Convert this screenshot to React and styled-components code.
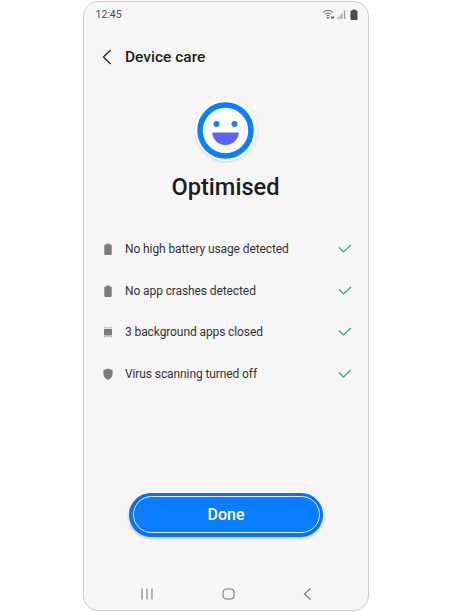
import React from "react";
import styled, { createGlobalStyle } from "styled-components";

const Global = createGlobalStyle`
  html, body { margin: 0; padding: 0; background: #fff; }
  body { font-family: Roboto, "Liberation Sans", sans-serif; }
`;

const Page = styled.div`
  width: 450px;
  height: 612px;
  padding: 1px 0 0 83px;
  box-sizing: border-box;
  overflow: hidden;
`;

const Phone = styled.div`
  width: 286px;
  height: 610px;
  box-sizing: border-box;
  background: #f6f6f6;
  border: 1.5px solid #cccccc;
  border-radius: 15px;
  display: flex;
  flex-direction: column;
`;

const StatusBar = styled.div`
  height: 24px;
  padding: 0 10px 0 11.5px;
  display: flex;
  align-items: center;
  justify-content: space-between;
`;

const Time = styled.span`
  font-size: 10.5px;
  color: #4a4a4a;
`;

const StatusIcons = styled.div`
  display: flex;
  align-items: center;
  gap: 2px;
`;

const Header = styled.div`
  height: 42px;
  margin-top: 10px;
  padding-left: 17.5px;
  display: flex;
  align-items: center;
  gap: 13.5px;
`;

const Title = styled.h1`
  margin: 0;
  font-size: 15.5px;
  font-weight: 500;
  color: #1c1c1c;
`;

const Hero = styled.div`
  margin-top: 21px;
  padding-right: 1px;
  display: flex;
  flex-direction: column;
  align-items: center;
`;

const Face = styled.div`
  width: 62px;
  height: 62px;
  border-radius: 50%;
  background: #fff;
  box-shadow: 0 1px 3px rgba(0, 0, 0, 0.14);
  display: flex;
  align-items: center;
  justify-content: center;
`;

const Heading = styled.h2`
  margin: 10px 0 0;
  font-size: 23.6px;
  line-height: 32px;
  font-weight: 500;
  color: #1d1d1d;
`;

const List = styled.ul`
  margin: 25.5px 0 0;
  padding: 0 0 0 19px;
  list-style: none;
`;

const Row = styled.li`
  height: 41.5px;
  padding-right: 16px;
  display: flex;
  align-items: center;
`;

const RowIcon = styled.span`
  width: 22px;
  display: flex;
  justify-content: flex-start;
`;

const RowText = styled.span`
  flex: 1;
  font-size: 12px;
  letter-spacing: -0.1px;
  color: #333333;
`;

const Done = styled.button`
  align-self: center;
  margin-top: auto;
  margin-bottom: 40.5px;
  width: 194px;
  height: 44px;
  padding: 0;
  border: 3px solid #0a72ee;
  border-radius: 22px;
  background: #0a7cff;
  box-shadow: 0 1px 3px rgba(0, 0, 0, 0.3), 0 0 0 1px #fff;
  position: relative;
  font-family: inherit;
  font-size: 16px;
  font-weight: 500;
  color: #fff;

  &::after {
    content: "";
    position: absolute;
    inset: 0.5px;
    border: 1px solid #dcebff;
    border-radius: 19px;
  }
`;

const NavBar = styled.nav`
  height: 33px;
  padding: 0 56px 0 57px;
  display: flex;
  align-items: center;
  justify-content: space-between;
`;

const Battery = () => (
  <svg width="10" height="12" viewBox="0 0 10 12">
    <path d="M3.5 0.5h3v1h1.2q1 0 1 1V11q0 1-1 1H2.300q-1 0-1-1V2.500q0-1 1-1h1.200z" fill="#7b7b7b" />
  </svg>
);

const Chip = () => (
  <svg width="10" height="12" viewBox="0 0 10 12">
    <rect x="1" y="3" width="8" height="6.500" rx="0.800" fill="#7b7b7b" />
    <path d="M1 1.800h8M1 10.700h8" stroke="#8a8a8a" strokeWidth="1" strokeDasharray="1 0.800" />
  </svg>
);

const Shield = () => (
  <svg width="10" height="12" viewBox="0 0 10 12">
    <path d="M5 0.500L9.500 2v4c0 3-2.200 4.900-4.500 5.700C2.700 10.900.5 9 .5 6V2z" fill="#7b7b7b" />
  </svg>
);

const Check = () => (
  <svg width="14" height="10" viewBox="0 0 14 10">
    <path d="M1 3.500L5.500 8L13 1" fill="none" stroke="#2aa876" strokeWidth="1.200" />
  </svg>
);

const rows = [
  { text: "No high battery usage detected", icon: <Battery /> },
  { text: "No app crashes detected", icon: <Battery /> },
  { text: "3 background apps closed", icon: <Chip /> },
  { text: "Virus scanning turned off", icon: <Shield /> },
];

export default function App() {
  return (
    <>
      <Global />
      <Page>
        <Phone>
          <StatusBar>
            <Time>12:45</Time>
            <StatusIcons>
              <svg width="13" height="10" viewBox="0 0 13 10">
                <path d="M1 3.500Q6-1 11 3.500M2.800 5.300Q6 2.400 9.200 5.300M4.500 7Q6 5.700 7.500 7" fill="none" stroke="#666" strokeWidth="1" />
                <rect x="5" y="8" width="2" height="1.500" fill="#666" />
                <rect x="9" y="7.500" width="3" height="2" fill="#666" />
              </svg>
              <svg width="9" height="9" viewBox="0 0 9 9">
                <path d="M1 9V7.500M3 9V5.500M5 9V3.500M7.500 9V0.500" stroke="#999" strokeWidth="1.200" />
              </svg>
              <svg width="8" height="11" viewBox="0 0 8 11" style={{ marginLeft: 2 }}>
                <path d="M2.500 0.500h3v1h1q1 0 1 1V10q0 1-1 1h-5q-1 0-1-1V2.500q0-1 1-1h1z" fill="#4b4b4b" />
              </svg>
            </StatusIcons>
          </StatusBar>
          <Header>
            <svg width="10" height="16" viewBox="0 0 10 16">
              <path d="M8.500 1L1.500 8L8.500 15" fill="none" stroke="#2a2a2a" strokeWidth="1.400" />
            </svg>
            <Title>Device care</Title>
          </Header>
          <Hero>
            <Face>
              <svg width="57" height="57" viewBox="0 0 57 57">
                <circle cx="28.500" cy="28.500" r="25.500" fill="#fff" stroke="#0a80ff" strokeWidth="5.500" />
                <circle cx="19.500" cy="22" r="3" fill="#2180f0" />
                <circle cx="37.500" cy="22" r="3" fill="#2180f0" />
                <path d="M16.500 30.500h24c1 0 1.500.6 1.300 1.500C40.500 38.500 35 43 28.500 43S16.500 38.500 15.200 32c-.2-.9.300-1.500 1.300-1.500z" fill="#5f63f2" />
              </svg>
            </Face>
            <Heading>Optimised</Heading>
          </Hero>
          <List>
            {rows.map((r) => (
              <Row key={r.text}>
                <RowIcon>{r.icon}</RowIcon>
                <RowText>{r.text}</RowText>
                <Check />
              </Row>
            ))}
          </List>
          <Done>Done</Done>
          <NavBar>
            <svg width="12" height="12" viewBox="0 0 12 12">
              <path d="M1 0.500V11.500M6 0.500V11.500M11 0.500V11.500" stroke="#777" strokeWidth="1" />
            </svg>
            <svg width="13" height="12" viewBox="0 0 13 12">
              <rect x="1" y="1" width="11" height="10" rx="3.500" fill="none" stroke="#777" strokeWidth="1.100" />
            </svg>
            <svg width="9" height="12" viewBox="0 0 9 12">
              <path d="M7.500 0.500L1.500 6L7.500 11.500" fill="none" stroke="#777" strokeWidth="1.100" />
            </svg>
          </NavBar>
        </Phone>
      </Page>
    </>
  );
}
